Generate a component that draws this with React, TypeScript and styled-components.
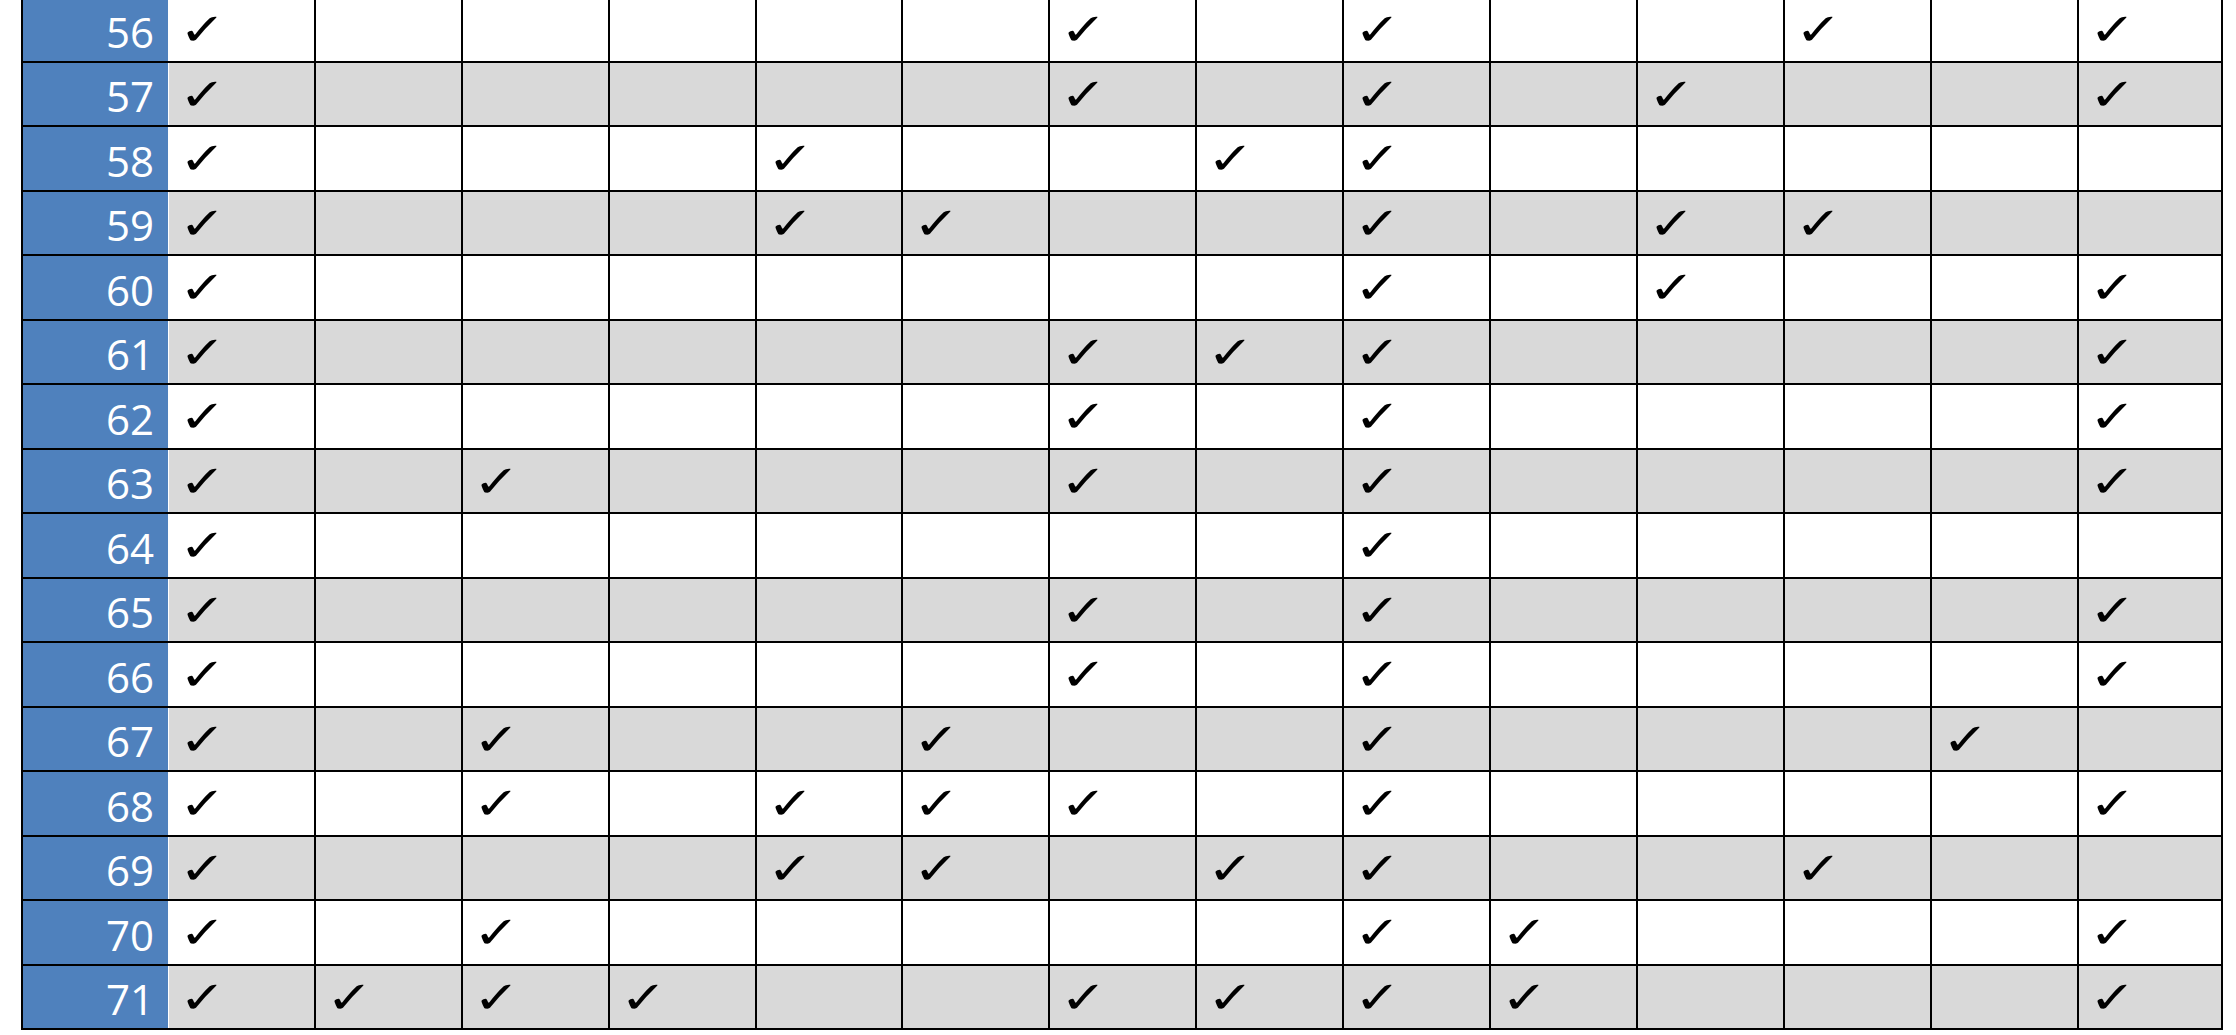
import React from "react";
import styled, { createGlobalStyle } from "styled-components";

const Global = createGlobalStyle`
  html, body { margin: 0; padding: 0; background: #ffffff; overflow: hidden; }
  body { font-family: "Open Sans", "Liberation Sans", sans-serif; }
`;

const Sheet = styled.div`
  margin: -2px 0 0 21px;
  width: 2202px;
  border-left: 2px solid #000;
  border-right: 2px solid #000;
  box-sizing: border-box;
`;

const Row = styled.div<{ $shade: boolean }>`
  display: grid;
  grid-template-columns: 146px repeat(13, 146.9px) 1fr;
  height: 64.5px;
  box-sizing: border-box;
  border-bottom: 2px solid #000;
  background: ${(p) => (p.$shade ? "#d9d9d9" : "#ffffff")};
`;

const Label = styled.div`
  background: #4f81bd;
  color: #ffffff;
  font-family: "Open Sans", "Liberation Sans", sans-serif;
  font-size: 42px;
  line-height: 42px;
  padding: 0 14px 8px 0;
  display: flex;
  align-items: flex-end;
  justify-content: flex-end;
  box-sizing: border-box;
  border-right: 1px solid #ffffff;
`;

const Cell = styled.div`
  border-right: 2px solid #000;
  box-sizing: border-box;
  position: relative;
  overflow: hidden;
  &:last-child { border-right: none; }
`;

const Check = styled.span`
  position: absolute;
  left: 10px;
  top: 9px;
  font-family: "DejaVu Sans", sans-serif;
  font-weight: 200;
  font-size: 56px;
  line-height: 56px;
  color: #000;
  transform: scale(1, 0.8);
  transform-origin: 0 0;
`;

const data: [number, number[]][] = [
  [56, [1, 7, 9, 12, 14]],
  [57, [1, 7, 9, 11, 14]],
  [58, [1, 5, 8, 9]],
  [59, [1, 5, 6, 9, 11, 12]],
  [60, [1, 9, 11, 14]],
  [61, [1, 7, 8, 9, 14]],
  [62, [1, 7, 9, 14]],
  [63, [1, 3, 7, 9, 14]],
  [64, [1, 9]],
  [65, [1, 7, 9, 14]],
  [66, [1, 7, 9, 14]],
  [67, [1, 3, 6, 9, 13]],
  [68, [1, 3, 5, 6, 7, 9, 14]],
  [69, [1, 5, 6, 8, 9, 12]],
  [70, [1, 3, 9, 10, 14]],
  [71, [1, 2, 3, 4, 7, 8, 9, 10, 14]],
];

export default function App() {
  return (
    <>
      <Global />
      <Sheet>
        {data.map(([n, checks], i) => (
          <Row key={n} $shade={i % 2 === 1}>
            <Label>{n}</Label>
            {Array.from({ length: 14 }, (_, c) => (
              <Cell key={c}>{checks.includes(c + 1) ? <Check>✓</Check> : null}</Cell>
            ))}
          </Row>
        ))}
      </Sheet>
    </>
  );
}
